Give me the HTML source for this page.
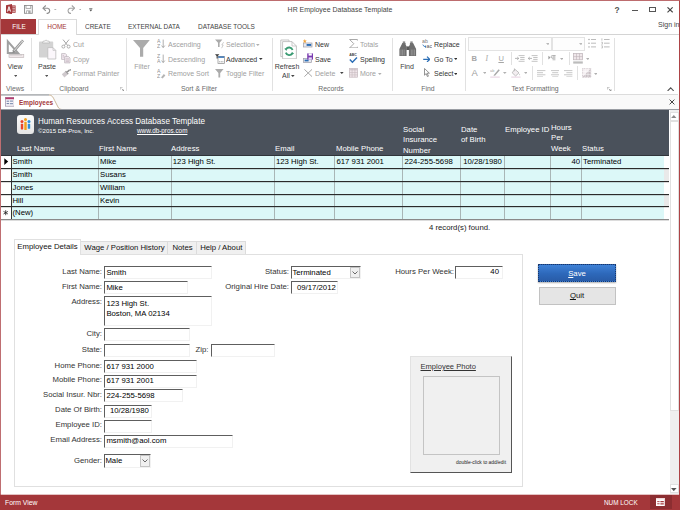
<!DOCTYPE html>
<html><head><meta charset="utf-8"><title>HR Employee Database Template</title>
<style>
*{box-sizing:border-box;margin:0;padding:0}
html,body{width:680px;height:510px;overflow:hidden;background:#fff}
body{font-family:"Liberation Sans",sans-serif;font-size:8px;color:#444;position:relative}
.a{position:absolute;white-space:nowrap}
.t{position:absolute;white-space:nowrap;line-height:10px;height:10px}
.g{color:#a6a6a6}
.k{color:#333}
#win{position:absolute;left:0;top:0;width:680px;height:510px;border-left:1px solid #bf6e71;border-right:1px solid #ad4346;border-top:1px solid #bd6c6e}
/* ribbon */
.sep{position:absolute;top:38px;height:53px;width:1px;background:#e1e1e1}
.gl{position:absolute;top:83.7px;height:10px;line-height:10px;font-size:7.6px;color:#6a6a6a;width:80px;text-align:center;transform:scaleX(.9);white-space:nowrap}
.r{position:absolute;white-space:nowrap;line-height:10px;height:10px;font-size:7.8px;transform:scaleX(.9);transform-origin:0 50%;color:#444}
.rc{position:absolute;white-space:nowrap;line-height:10px;height:10px;font-size:7.8px;width:60px;text-align:center;transform:scaleX(.9);transform-origin:50% 50%;color:#444}
.r.g,.rc.g{color:#a0a0a0}.r.k,.rc.k{color:#3b3b3b}
.r.u,.rc.u{font-size:7.5px;transform:scaleX(.86)}.u{}
/* form */
.f{font-family:"Liberation Sans",sans-serif;font-size:7.75px;color:#000}
.hd{position:absolute;color:#fff;font-size:7.75px;line-height:9px;white-space:nowrap}
.row{position:absolute;left:1px;width:668px;height:13px}
.cell{position:absolute;top:0;height:13px;background:#dff9f9;border-left:1px solid #9aa;font-size:7.4px;line-height:12px;color:#000;padding-left:1px;white-space:nowrap;overflow:hidden}
.lb{position:absolute;font-size:7.75px;line-height:10px;color:#333;text-align:right;white-space:nowrap}
.tb{position:absolute;background:#fff;border-top:1px solid #5e5e5e;border-left:1px solid #5e5e5e;border-right:1px solid #f1f1f1;border-bottom:1px solid #f1f1f1;font-size:7.75px;line-height:10px;color:#000;padding-left:1.4px;padding-top:.7px;white-space:nowrap;overflow:hidden}
</style></head><body>
<div id="win"></div>

<!-- TITLE BAR -->
<div id="titlebar">
<div class="rc" style="left:239.5px;width:200px;top:5.2px;font-size:7.8px;color:#444;transform:scaleX(.893)">HR Employee Database Template</div>
<svg class="a" style="left:6.4px;top:4.2px" width="10.2" height="10.2" viewBox="0 0 10.2 10.2"><path d="M0 1.2 L6 0 V10.2 L0 9 Z" fill="#a4373a"/><rect x="6" y="1.4" width="3.6" height="7.4" fill="#a4373a"/><path d="M6.4 2.8H9M6.4 4.4H9M6.4 6H9M6.4 7.6H9" stroke="#fff" stroke-width=".6"/><path d="M1.4 7.6 L3 2.6 L4.6 7.6 M2 6H4" fill="none" stroke="#fff" stroke-width=".9"/></svg>
<svg class="a" style="left:24.4px;top:5.4px" width="8.8" height="8.8" viewBox="0 0 8.8 8.8"><rect x=".5" y=".5" width="7.8" height="7.8" fill="#fafafa" stroke="#8c8c8c" stroke-width=".9"/><rect x="2" y=".5" width="4.8" height="2.8" fill="#fff" stroke="#8c8c8c" stroke-width=".7"/><rect x="2.2" y="5.4" width="4.4" height="2.9" fill="#a6a6a6"/><rect x="3" y="6.2" width="1.2" height="2.1" fill="#fff"/></svg>
<svg class="a" style="left:42.2px;top:5.2px" width="9.4" height="8.6" viewBox="0 0 9.4 8.6"><path d="M1 3.2 H5.4 A2.7 2.7 0 0 1 5.4 8.4 H4.4" fill="none" stroke="#8e8e8e" stroke-width="1.1" transform="scale(1.05 1)"/><path d="M3.8 .5 L1 3.2 L3.8 5.9" fill="none" stroke="#8e8e8e" stroke-width="1.1"/></svg>
<svg class="a" style="left:65.8px;top:5.2px" width="9.6" height="8.6" viewBox="0 0 9.6 8.6"><path d="M8.4 3.2 H4 A2.7 2.7 0 0 0 4 8.4 H5" fill="none" stroke="#a2a2a2" stroke-width="1.1"/><path d="M5.8 .5 L8.6 3.2 L5.8 5.9" fill="none" stroke="#a2a2a2" stroke-width="1.1"/></svg>
<svg class="a" style="left:54.400000000000006px;top:8.549999999999999px" width="2.6" height="1.5" viewBox="0 0 4 2.2"><path d="M0 0H4L2 2.2Z" fill="#b0b0b0"/></svg>
<svg class="a" style="left:78.9px;top:8.549999999999999px" width="2.6" height="1.5" viewBox="0 0 4 2.2"><path d="M0 0H4L2 2.2Z" fill="#b0b0b0"/></svg>
<svg class="a" style="left:89.4px;top:8.4px" width="3.6" height="3.6" viewBox="0 0 3.6 3.6"><path d="M.2 .4H3.4" stroke="#555" stroke-width=".7"/><path d="M.2 1.6H3.4L1.8 3.4Z" fill="#555"/></svg>
<div class="t" style="left:614.6px;top:4.6px;font-size:8.4px;font-weight:bold;color:#555">?</div>
<div class="a" style="left:632.4px;top:10.2px;width:5.2px;height:1.2px;background:#555"></div>
<div class="a" style="left:649.4px;top:6.6px;width:6.2px;height:5.8px;border:1px solid #555;border-top-width:1.6px"></div>
<svg class="a" style="left:667.2px;top:7px" width="6.2" height="5.6" viewBox="0 0 6.2 5.6"><path d="M.5 .3L5.7 5.3M5.7 .3L.5 5.3" stroke="#444" stroke-width="1.1"/></svg>
</div>

<!-- RIBBON TABS -->
<div id="tabs">
<div class="a" style="left:1px;top:19px;width:35px;height:15.4px;background:#a4373a"></div>
<div class="a" style="left:1px;top:34px;width:678px;height:1px;background:#d4d4d4"></div>
<div class="a" style="left:38px;top:19px;width:38.6px;height:16px;background:#fff;border:1px solid #dadada;border-bottom:none"></div>
<div class="rc u" style="left:-11.5px;top:21.8px;color:#fff">FILE</div>
<div class="rc u" style="left:27.3px;top:21.8px;color:#a4373a">HOME</div>
<div class="r u" style="left:85.4px;top:21.8px">CREATE</div>
<div class="r u" style="left:127.6px;top:21.8px">EXTERNAL DATA</div>
<div class="r u" style="left:198.3px;top:21.8px">DATABASE TOOLS</div>
<div class="r" style="left:657.6px;top:20.4px;color:#444">Sign in</div>
</div>

<!-- RIBBON -->
<div id="ribbon">
<div class="a" style="left:1px;top:94px;width:677px;height:1px;background:#dcdcdc"></div>
<div class="sep" style="left:30.5px"></div>
<div class="sep" style="left:126px"></div>
<div class="sep" style="left:272px"></div>
<div class="sep" style="left:392px"></div>
<div class="sep" style="left:465px"></div>
<div class="sep" style="left:614px"></div>
<div class="gl" style="left:-25px">Views</div>
<div class="gl" style="left:34px">Clipboard</div>
<div class="gl" style="left:159px">Sort &amp; Filter</div>
<div class="gl" style="left:291px">Records</div>
<div class="gl" style="left:388px">Find</div>
<div class="gl" style="left:495px">Text Formatting</div>
<svg class="a" style="left:6px;top:38px" width="19" height="21" viewBox="0 0 19 21"><path d="M1.8 3.4 V15 H12 Z" fill="none" stroke="#a0a0a0" stroke-width="2" stroke-linejoin="miter"/>
<rect x="3" y="16.4" width="14.8" height="3.2" fill="#f0e8ea" stroke="#bdb5b7" stroke-width=".6"/>
<path d="M5 16.4v1.5M7 16.4v1.5M9 16.4v1.5M11 16.4v1.5M13 16.4v1.5M15 16.4v1.5" stroke="#a6a6a6" stroke-width=".5"/>
<path d="M17 2.4 L7.2 13.8" stroke="#9a9a9a" stroke-width="2.8" stroke-linecap="butt"/><path d="M16.2 3.4 L8 12.9" stroke="#e4e4e4" stroke-width=".9"/>
<path d="M7.9 12.6 L6 15.2 L8.8 14.2 Z" fill="#8a8a8a"/><path d="M15.2 2.6 L17.6 4.6" stroke="#fff" stroke-width=".7"/></svg>
<div class="rc k" style="left:-15px;top:61.5px;">View</div>
<svg class="a" style="left:13.8px;top:74.95px" width="3.4" height="1.9" viewBox="0 0 4 2.2"><path d="M0 0H4L2 2.2Z" fill="#555"/></svg>
<svg class="a" style="left:38px;top:39px" width="19" height="21" viewBox="0 0 19 21"><rect x="1" y="2.6" width="14.2" height="16" rx=".8" fill="#d3d3d3"/>
<path d="M4.4 4 L5.4 2 H6.9 A1.3 1.3 0 0 1 9.3 2 H10.8 L11.8 4 Z" fill="#f4f4f4" stroke="#b4b4b4" stroke-width=".7"/>
<path d="M9.8 8.6 H15 L17.8 11.4 V20 H9.8 Z" fill="#fbf7fb" stroke="#bdbdbd" stroke-width=".8"/>
<path d="M15 8.6 V11.4 H17.8" fill="none" stroke="#bdbdbd" stroke-width=".7"/></svg>
<div class="rc k" style="left:16.5px;top:61.5px;">Paste</div>
<svg class="a" style="left:44.5px;top:74.95px" width="3.4" height="1.9" viewBox="0 0 4 2.2"><path d="M0 0H4L2 2.2Z" fill="#555"/></svg>
<svg class="a" style="left:61px;top:39px" width="10" height="10" viewBox="0 0 10 10"><path d="M2 .6 L6.6 6.4 M8 .6 L3.4 6.4" stroke="#9c9c9c" stroke-width=".9" fill="none"/>
<circle cx="2.4" cy="7.6" r="1.5" fill="none" stroke="#9c9c9c" stroke-width=".8"/><circle cx="7.6" cy="7.6" r="1.5" fill="none" stroke="#9c9c9c" stroke-width=".8"/></svg>
<div class="r g" style="left:72.5px;top:39.8px;">Cut</div>
<svg class="a" style="left:61px;top:53px" width="10" height="10.5" viewBox="0 0 10 10.5"><path d="M.6 .6 H4.4 L5.6 1.8 V6.4 H.6 Z" fill="#f3eaf0" stroke="#b9b1b7" stroke-width=".7"/>
<path d="M3.6 3.6 H7.6 L9 5 V9.9 H3.6 Z" fill="#f3eaf0" stroke="#b9b1b7" stroke-width=".7"/>
<path d="M4.6 5.8H8M4.6 7.2H8M4.6 8.6H8M1.6 2.6H3M1.6 4H3" stroke="#b9a9b5" stroke-width=".6"/></svg>
<div class="r g" style="left:72.5px;top:54.5px;">Copy</div>
<svg class="a" style="left:61px;top:68.5px" width="10.5" height="9" viewBox="0 0 10.5 9"><path d="M.8 5.2 L5 1.8 L7.6 4.8 L3.4 8.4 Z" fill="#cfc9cd"/><path d="M4.6 2.2 L7.2 5.2" stroke="#9a9a9a" stroke-width="1.1"/>
<path d="M6.2 3 L8.4 1.2" stroke="#8a8a8a" stroke-width="1.6"/><circle cx="9.2" cy=".9" r=".8" fill="#8a8a8a"/></svg>
<div class="r g" style="left:72.5px;top:69.2px;">Format Painter</div>
<div id="RIB2">
<svg class="a" style="left:133px;top:40px" width="17" height="17" viewBox="0 0 17 17"><path d="M0 0 H16.8 L10.2 8 V16.8 H7 V8 Z" fill="#ababab"/></svg>
<div class="rc g" style="left:111.80000000000001px;top:61.5px;">Filter</div>
<svg class="a" style="left:157px;top:39px" width="9" height="10" viewBox="0 0 9 10"><text x="0" y="4.4" font-size="5.2" font-family="Liberation Sans" fill="#929292">A</text><text x="0" y="9.2" font-size="5.2" font-family="Liberation Sans" fill="#929292">Z</text><path d="M6.2 .6 V8.4 M4.6 6.6 L6.2 8.6 L7.8 6.6" stroke="#9a9a9a" stroke-width=".8" fill="none"/></svg>
<div class="r g" style="left:167.8px;top:39.8px;">Ascending</div>
<svg class="a" style="left:157px;top:53.5px" width="9" height="10" viewBox="0 0 9 10"><text x="0" y="4.4" font-size="5.2" font-family="Liberation Sans" fill="#929292">Z</text><text x="0" y="9.2" font-size="5.2" font-family="Liberation Sans" fill="#929292">A</text><path d="M6.2 .6 V8.4 M4.6 6.6 L6.2 8.6 L7.8 6.6" stroke="#9a9a9a" stroke-width=".8" fill="none"/></svg>
<div class="r g" style="left:167.8px;top:54.5px;">Descending</div>
<svg class="a" style="left:157px;top:68.5px" width="9" height="10" viewBox="0 0 9 10"><text x="0" y="4.4" font-size="5.2" font-family="Liberation Sans" fill="#929292">A</text><text x="0" y="9.2" font-size="5.2" font-family="Liberation Sans" fill="#929292">Z</text><path d="M4 8.4 L6.8 5 L8.4 6.4 L5.6 9.4 Z" fill="#b4b4b4"/></svg>
<div class="r g" style="left:167.8px;top:69.2px;">Remove Sort</div>
<svg class="a" style="left:214.5px;top:39px" width="9.5" height="9.5" viewBox="0 0 9.5 9.5"><path d="M0 .4 H7.4 L4.6 3.8 V8 H3 V3.8 Z" fill="#ababab"/><path d="M8.6 3.2 L6.8 6 H8.2 L6.6 9.2" stroke="#b9b9b9" stroke-width=".7" fill="none"/></svg>
<div class="r g" style="left:226px;top:39.8px;">Selection</div>
<svg class="a" style="left:256.2px;top:43.7px" width="3.6" height="2.2" viewBox="0 0 4 2.2"><path d="M0 0H4L2 2.2Z" fill="#b0b0b0"/></svg>
<svg class="a" style="left:214.5px;top:53.5px" width="10" height="10" viewBox="0 0 10 10"><path d="M0 .2 H4.4 L2.8 2 V4.6 H1.6 V2 Z" fill="#3a3a3a"/><rect x="3" y="2.6" width="6.4" height="6.8" fill="#fff" stroke="#8a8a8a" stroke-width=".7"/><rect x="3.2" y="2.4" width="6" height="1.4" fill="#2a6db5"/><path d="M4.2 7.8h1M5.8 7.8h1M7.4 7.8h1" stroke="#777" stroke-width=".8"/></svg>
<div class="r k" style="left:226px;top:54.5px;color:#333">Advanced</div>
<svg class="a" style="left:259.4px;top:58.4px" width="3.6" height="2.2" viewBox="0 0 4 2.2"><path d="M0 0H4L2 2.2Z" fill="#333"/></svg>
<svg class="a" style="left:214.5px;top:69px" width="9" height="9" viewBox="0 0 9 9"><path d="M0 0 H8.6 L5.2 4 V8.6 H3.4 V4 Z" fill="#ababab"/></svg>
<div class="r g" style="left:226.2px;top:69.2px;">Toggle Filter</div>
<svg class="a" style="left:280px;top:38.5px" width="17.5" height="20.5" viewBox="0 0 17.5 20.5"><path d="M.8 1 H9 V17.6 H.8 Z" fill="#fff" stroke="#b5b5b5" stroke-width=".8"/>
<path d="M2.6 2.6 H12 L16.4 7 V19.8 H2.6 Z" fill="#fff" stroke="#b5b5b5" stroke-width=".8"/><path d="M12 2.6 V7 H16.4" fill="none" stroke="#b5b5b5" stroke-width=".7"/>
<path d="M12.6 11 A3.6 3.6 0 0 0 6 10.4" fill="none" stroke="#3a9b73" stroke-width="1.8"/><path d="M4.6 9.2 L7.6 9.2 L6 12 Z" fill="#3a9b73" transform="rotate(-20 6 10.4)"/>
<path d="M5.8 13.6 A3.6 3.6 0 0 0 12.4 14.2" fill="none" stroke="#3a9b73" stroke-width="1.8"/><path d="M10.8 15.4 L13.8 15.4 L12.4 12.6 Z" fill="#3a9b73" transform="rotate(-20 12.4 14.2)"/></svg>
<div class="rc k" style="left:257.4px;top:61.5px;">Refresh</div>
<div class="r k" style="left:281.6px;top:71.4px;">All</div>
<svg class="a" style="left:291.4px;top:75.3px" width="3.6" height="2.2" viewBox="0 0 4 2.2"><path d="M0 0H4L2 2.2Z" fill="#444"/></svg>
<svg class="a" style="left:302.5px;top:38.5px" width="10" height="9" viewBox="0 0 10 9"><rect x=".6" y="4" width="8.4" height="4" fill="#e9e9ee" stroke="#9a9aa6" stroke-width=".7"/><rect x="3.6" y="5" width="4.6" height="1.9" fill="#2a6db5"/><path d="M1.8 0 L2.4 1.4 L3.8 1.6 L2.7 2.5 L3.1 4 L1.8 3.2 L.5 4 L.9 2.5 L-.2 1.6 L1.2 1.4 Z" fill="#f2a33a"/></svg>
<div class="r k" style="left:315px;top:39.8px;color:#333">New</div>
<svg class="a" style="left:302.5px;top:53px" width="10.5" height="10" viewBox="0 0 10.5 10"><rect x=".6" y="5.6" width="8" height="3.8" fill="#e9e9ee" stroke="#9a9aa6" stroke-width=".7"/><rect x="1.6" y="6.6" width="4" height="1.8" fill="#2a6db5"/><path d="M4.2 .4 H10.2 V6.6 H4.2 Z" fill="#7a3bb0"/><rect x="5.6" y=".4" width="3.2" height="2.2" fill="#fff"/><rect x="5.6" y="4.4" width="3.2" height="2.2" fill="#e9defa"/></svg>
<div class="r k" style="left:315px;top:54.5px;color:#333">Save</div>
<svg class="a" style="left:303.5px;top:69.3px" width="8.5" height="8" viewBox="0 0 8.5 8"><path d="M.4 .4 L8 7.6 M8 .4 L.4 7.6" stroke="#a8a8a8" stroke-width="1" fill="none"/></svg>
<div class="r g" style="left:315px;top:69.2px;">Delete</div>
<svg class="a" style="left:340.4px;top:71.89999999999999px" width="3.6" height="2.2" viewBox="0 0 4 2.2"><path d="M0 0H4L2 2.2Z" fill="#444"/></svg>
<svg class="a" style="left:348.5px;top:38.8px" width="9" height="9.4" viewBox="0 0 9 9.4"><path d="M8.4 1.6 V.5 H.6 L4.8 4.7 L.6 8.9 H8.4 V7.8" fill="none" stroke="#a8a8a8" stroke-width="1"/></svg>
<div class="r g" style="left:360.1px;top:39.8px;">Totals</div>
<svg class="a" style="left:348.8px;top:53.2px" width="9" height="10.4" viewBox="0 0 9 10.4"><text x=".2" y="3.2" font-size="3.6" font-weight="bold" font-family="Liberation Sans" fill="#444" textLength="7.6" lengthAdjust="spacingAndGlyphs">ABC</text><path d="M.8 6.6 L3.4 9.2 L8 4.4" fill="none" stroke="#2a6db5" stroke-width="1.4"/></svg>
<div class="r k" style="left:360.1px;top:54.5px;color:#333">Spelling</div>
<svg class="a" style="left:348.6px;top:68.2px" width="9" height="9.6" viewBox="0 0 9 9.6"><rect x=".4" y=".4" width="8.2" height="8.8" fill="#f0e6ea" stroke="#c4b8be" stroke-width=".7"/><rect x=".4" y=".4" width="8.2" height="2" fill="#d3c9cf"/><path d="M3.1 .4V9.2M5.9 .4V9.2M.4 4.6H8.6M.4 6.9H8.6" stroke="#c4b8be" stroke-width=".6"/></svg>
<div class="r g" style="left:360.1px;top:69.2px;">More</div>
<svg class="a" style="left:378.2px;top:73.1px" width="3.6" height="2.2" viewBox="0 0 4 2.2"><path d="M0 0H4L2 2.2Z" fill="#b0b0b0"/></svg>
<svg class="a" style="left:399px;top:40.5px" width="17.5" height="15.5" viewBox="0 0 17.5 15.5"><path d="M3.4 2 H6.6 V3.4 L7.6 5.4 V15 H.4 V8 Z" fill="#6e6e6e"/><path d="M14.1 2 H10.9 V3.4 L9.9 5.4 V15 H17.1 V8 Z" fill="#6e6e6e"/>
<rect x="3.8" y=".4" width="2.4" height="1.8" fill="#8a8a8a"/><rect x="11.3" y=".4" width="2.4" height="1.8" fill="#8a8a8a"/><rect x="7.4" y="5.4" width="2.8" height="3.6" fill="#5a5a5a"/>
<path d="M2 8.5V14.5M3.6 8.5V14.5M5.2 8.5V14.5M12.3 8.5V14.5M13.9 8.5V14.5M15.5 8.5V14.5" stroke="#a9a9a9" stroke-width=".6"/></svg>
<div class="rc k" style="left:377.4px;top:61.5px;">Find</div>
<svg class="a" style="left:421.8px;top:39px" width="10.4" height="9.6" viewBox="0 0 10.4 9.6"><text x="0" y="4.2" font-size="5.2" font-family="Liberation Sans" fill="#777">ab</text><text x="4.6" y="9" font-size="5.2" font-family="Liberation Sans" fill="#555">ac</text><path d="M.8 5.6 Q1.4 8 4 7.6 M3 6.6 L4.2 7.6 L3 8.8" fill="none" stroke="#2a6db5" stroke-width=".8"/></svg>
<div class="r k" style="left:433.9px;top:39.8px;color:#333">Replace</div>
<svg class="a" style="left:422.8px;top:55.6px" width="7.6" height="6.6" viewBox="0 0 7.6 6.6"><path d="M.2 3.3 H6.6 M4 .6 L6.8 3.3 L4 6" fill="none" stroke="#2a6db5" stroke-width="1.2"/></svg>
<div class="r k" style="left:433.9px;top:54.5px;color:#333">Go To</div>
<svg class="a" style="left:453.9px;top:58.4px" width="3.6" height="2.2" viewBox="0 0 4 2.2"><path d="M0 0H4L2 2.2Z" fill="#333"/></svg>
<svg class="a" style="left:424px;top:68.2px" width="6" height="9.2" viewBox="0 0 6 9.2"><path d="M.5 .5 V7.2 L2.2 5.6 L3.4 8.6 L4.4 8.2 L3.2 5.2 H5.4 Z" fill="#fff" stroke="#666" stroke-width=".7"/></svg>
<div class="r k" style="left:433.9px;top:69.2px;color:#333">Select</div>
<svg class="a" style="left:453.9px;top:73.1px" width="3.6" height="2.2" viewBox="0 0 4 2.2"><path d="M0 0H4L2 2.2Z" fill="#333"/></svg>
<div class="a" style="left:467.5px;top:37px;width:84px;height:14.2px;background:#fdfdfd;border:1px solid #e3e3e3"></div>
<div class="a" style="left:551.5px;top:37px;width:33.5px;height:14.2px;background:#fdfdfd;border:1px solid #e3e3e3"></div>
<svg class="a" style="left:545.5px;top:42.849999999999994px" width="3.8000000000000003" height="2.3000000000000003" viewBox="0 0 4 2.2"><path d="M0 0H4L2 2.2Z" fill="#b9b9b9"/></svg>
<svg class="a" style="left:578.6px;top:42.849999999999994px" width="3.8000000000000003" height="2.3000000000000003" viewBox="0 0 4 2.2"><path d="M0 0H4L2 2.2Z" fill="#b9b9b9"/></svg>
<svg class="a" style="left:587.5px;top:38px" width="8.5" height="10.5" viewBox="0 0 8.5 10.5"><path d="M3 1.5H8M3 5.2H8M3 8.9H8" stroke="#b4b4b4" stroke-width=".9"/><circle cx="1" cy="1.5" r=".7" fill="#9a9a9a"/><circle cx="1" cy="5.2" r=".7" fill="#9a9a9a"/><circle cx="1" cy="8.9" r=".7" fill="#9a9a9a"/></svg>
<svg class="a" style="left:600.6px;top:38px" width="9" height="10.5" viewBox="0 0 9 10.5"><path d="M3 1.5H8.6M3 5.2H8.6M3 8.9H8.6" stroke="#b4b4b4" stroke-width=".9"/><path d="M.9 .4V2.6M.4 4.2H1.4V6.2H.4M.4 7.8H1.4V10H.4" stroke="#9a9a9a" stroke-width=".6" fill="none"/></svg>
<div class="t" style="left:471.6px;top:53.9px;font-size:7.6px;font-weight:bold;color:#a6a6a6">B</div>
<div class="t" style="left:485.6px;top:53.9px;font-size:7.6px;font-style:italic;color:#a6a6a6;font-family:'Liberation Serif',serif">I</div>
<div class="t" style="left:498.4px;top:53.9px;font-size:7.6px;color:#a6a6a6;text-decoration:underline">U</div>
<div class="a" style="left:510.5px;top:51.5px;width:1px;height:13.5px;background:#e1e1e1"></div>
<div class="a" style="left:542.3px;top:51.5px;width:1px;height:13.5px;background:#e1e1e1"></div>
<div class="a" style="left:568.6px;top:51.5px;width:1px;height:13.5px;background:#e1e1e1"></div>
<div class="a" style="left:532.2px;top:66.2px;width:1px;height:13.599999999999994px;background:#e1e1e1"></div>
<div class="a" style="left:577.3px;top:66.2px;width:1px;height:13.599999999999994px;background:#e1e1e1"></div>
<svg class="a" style="left:515px;top:55px" width="10" height="7" viewBox="0 0 10 7"><path d="M3.6 .6H9.6M5.2 2.5H9.6M5.2 4.4H9.6M3.6 6.3H9.6" stroke="#b4b4b4" stroke-width=".8"/><path d="M0 3.4H3.6M2.2 2L3.8 3.4L2.2 4.8" stroke="#9a9a9a" stroke-width=".7" fill="none"/></svg>
<svg class="a" style="left:528.2px;top:55px" width="10" height="7" viewBox="0 0 10 7"><path d="M3.6 .6H9.6M5.2 2.5H9.6M5.2 4.4H9.6M3.6 6.3H9.6" stroke="#b4b4b4" stroke-width=".8"/><path d="M.4 3.4H4M1.8 2L.2 3.4L1.8 4.8" stroke="#9a9a9a" stroke-width=".7" fill="none"/></svg>
<svg class="a" style="left:548px;top:55.4px" width="8" height="5.6" viewBox="0 0 8 5.6"><path d="M.4 .8L2.6 2.6L.4 4.4Z" fill="#9a9a9a"/><path d="M5.2 .4V5.4M6.8 .4V5.4M7.6 .4H4.6A1.4 1.4 0 0 0 4.6 3.2H5.2" stroke="#9a9a9a" stroke-width=".7" fill="none"/></svg>
<svg class="a" style="left:559.9000000000001px;top:57.7px" width="3.6" height="2.2" viewBox="0 0 4 2.2"><path d="M0 0H4L2 2.2Z" fill="#b0b0b0"/></svg>
<svg class="a" style="left:573px;top:53px" width="10" height="11" viewBox="0 0 10 11"><rect x=".4" y=".4" width="9.2" height="6.4" fill="#efe7ea" stroke="#bdb3b8" stroke-width=".7"/><path d="M3.5 .4V6.8M6.5 .4V6.8M.4 3.6H9.6" stroke="#bdb3b8" stroke-width=".6"/><rect x=".2" y="8.4" width="9.6" height="2.2" fill="#bcbcbc"/></svg>
<svg class="a" style="left:585.8000000000001px;top:57.7px" width="3.6" height="2.2" viewBox="0 0 4 2.2"><path d="M0 0H4L2 2.2Z" fill="#b0b0b0"/></svg>
<div class="t" style="left:471.4px;top:67.8px;font-size:9.4px;color:#a0a0a0">A</div>
<svg class="a" style="left:482.7px;top:72.39999999999999px" width="3.6" height="2.2" viewBox="0 0 4 2.2"><path d="M0 0H4L2 2.2Z" fill="#b0b0b0"/></svg>
<svg class="a" style="left:490px;top:68px" width="10.4" height="9.6" viewBox="0 0 10.4 9.6"><text x="0" y="3.8" font-size="4" font-family="Liberation Sans" fill="#aaa">ab</text><path d="M3.4 7.4 L8.6 1.2 L9.8 2.2 L5 7.8 Z" fill="#a8a8a8"/><rect x=".2" y="8.6" width="9.6" height="1" fill="#e6cfe0"/></svg>
<svg class="a" style="left:503.3px;top:72.39999999999999px" width="3.6" height="2.2" viewBox="0 0 4 2.2"><path d="M0 0H4L2 2.2Z" fill="#b0b0b0"/></svg>
<svg class="a" style="left:511px;top:68px" width="10" height="9.6" viewBox="0 0 10 9.6"><path d="M3.8 1.2 L8 4.8 L4.6 8 L1.2 4.8 Z" fill="#f3eef1" stroke="#b0b0b0" stroke-width=".8"/><path d="M3.4 .4 V3.2" stroke="#b0b0b0" stroke-width=".7"/><path d="M8.6 5.4 Q9.6 7 8.8 7.6 Q8 7 8.6 5.4Z" fill="#b0b0b0"/><rect x=".2" y="8.6" width="9.4" height="1" fill="#e6cfe0"/></svg>
<svg class="a" style="left:523.7px;top:72.39999999999999px" width="3.6" height="2.2" viewBox="0 0 4 2.2"><path d="M0 0H4L2 2.2Z" fill="#b0b0b0"/></svg>
<svg class="a" style="left:537.2px;top:69.6px" width="8.6" height="7.6" viewBox="0 0 8.6 7.6"><path d="M0 0.6H8.4" stroke="#b9b9b9" stroke-width=".8"/><path d="M0 2.7H6" stroke="#b9b9b9" stroke-width=".8"/><path d="M0 4.8H8.4" stroke="#b9b9b9" stroke-width=".8"/><path d="M0 6.9H6" stroke="#b9b9b9" stroke-width=".8"/></svg>
<svg class="a" style="left:550.8px;top:69.6px" width="8.6" height="7.6" viewBox="0 0 8.6 7.6"><path d="M0.0 0.6H8.4" stroke="#b9b9b9" stroke-width=".8"/><path d="M1.2000000000000002 2.7H7.2" stroke="#b9b9b9" stroke-width=".8"/><path d="M0.0 4.8H8.4" stroke="#b9b9b9" stroke-width=".8"/><path d="M1.2000000000000002 6.9H7.2" stroke="#b9b9b9" stroke-width=".8"/></svg>
<svg class="a" style="left:564px;top:69.6px" width="8.6" height="7.6" viewBox="0 0 8.6 7.6"><path d="M0.0 0.6H8.4" stroke="#b9b9b9" stroke-width=".8"/><path d="M2.4000000000000004 2.7H8.4" stroke="#b9b9b9" stroke-width=".8"/><path d="M0.0 4.8H8.4" stroke="#b9b9b9" stroke-width=".8"/><path d="M2.4000000000000004 6.9H8.4" stroke="#b9b9b9" stroke-width=".8"/></svg>
<svg class="a" style="left:582.2px;top:68.2px" width="9.4" height="9.8" viewBox="0 0 9.4 9.8"><rect x=".4" y=".4" width="8.4" height="9" fill="#f4eef1" stroke="#c4bac0" stroke-width=".7" stroke-dasharray="1 .6"/><path d="M.6 9 L8.6 .8 V9 Z" fill="#c9c0c5"/><path d="M3.2 .4V9.4M6 .4V9.4M.4 3.4H8.8M.4 6.4H8.8" stroke="#fff" stroke-width=".5"/></svg>
<svg class="a" style="left:593.7px;top:72.5px" width="3.6" height="2.2" viewBox="0 0 4 2.2"><path d="M0 0H4L2 2.2Z" fill="#b0b0b0"/></svg>
<svg class="a" style="left:607.4px;top:86.8px" width="4.4" height="4.4" viewBox="0 0 4.4 4.4"><path d="M.3 2.6V.3H2.6" fill="none" stroke="#9a9a9a" stroke-width=".6"/><path d="M1.8 1.8L4 4M4 2.2V4H2.2" fill="none" stroke="#888" stroke-width=".7"/></svg>
<svg class="a" style="left:119.5px;top:86.8px" width="4.4" height="4.4" viewBox="0 0 4.4 4.4"><path d="M.3 2.6V.3H2.6" fill="none" stroke="#9a9a9a" stroke-width=".6"/><path d="M1.8 1.8L4 4M4 2.2V4H2.2" fill="none" stroke="#888" stroke-width=".7"/></svg>
<svg class="a" style="left:666.8px;top:86.6px" width="7.4" height="4.6" viewBox="0 0 7.4 4.6"><path d="M.6 4 L3.7 .9 L6.8 4" fill="none" stroke="#555" stroke-width="1.1"/></svg>
</div>
</div>

<!-- DOC TABS -->
<div id="doctabs">
<div class="a" style="left:1px;top:95px;width:678px;height:14px;background:#f9f9f9"></div>
<svg class="a" style="left:1px;top:94px" width="62" height="16" viewBox="0 0 62 16"><path d="M0 15.5 V1 H48 C51 1 52 3 53.6 6.4 L57 13 C58 15 59.4 15.5 61.5 15.5 Z" fill="#fff"/><path d="M0 1 H48" stroke="#8f9499" stroke-width="1" fill="none"/><path d="M48 1 C51 1 52 3 53.6 6.4 L57 13 C58 15 59.4 15.5 61.5 15.5" stroke="#cdb89c" stroke-width="1" fill="none"/></svg>
<svg class="a" style="left:4.6px;top:97.2px" width="9.6" height="9.6" viewBox="0 0 9.6 9.6"><rect x=".4" y=".4" width="8.8" height="8.8" fill="#f7f4f8" stroke="#9a8fa6" stroke-width=".7"/><rect x=".4" y=".4" width="8.8" height="1.8" fill="#b43a6e"/><path d="M1.6 4.2H4M1.6 6.6H4" stroke="#5a6e9a" stroke-width=".9"/><path d="M4.8 4.2H8M4.8 6.6H8" stroke="#8a9ab8" stroke-width="1.3"/></svg>
<div class="r" style="left:18.8px;top:97.6px;font-weight:bold;color:#a4373a;font-size:7.6px;transform:scaleX(.85)">Employees</div>
<svg class="a" style="left:669px;top:99.4px" width="6" height="6" viewBox="0 0 6 6"><path d="M.6 .6L5.4 5.4M5.4 .6L.6 5.4" stroke="#444" stroke-width="1"/></svg>
</div>

<!-- FORM HEADER -->
<div id="fhead">
<div class="a" style="left:1px;top:109px;width:668px;height:47px;background:#4a515b"></div><div class="a" style="left:1px;top:155px;width:668px;height:1px;background:#30343a"></div><div class="a" style="left:1px;top:109px;width:678px;height:1px;background:#9a9da3"></div>

<div class="a" style="left:17px;top:115px;width:17px;height:18.5px;border-radius:3.2px;background:linear-gradient(#fafafa,#e4e4e4)"></div>
<svg class="a" style="left:17px;top:115px" width="17" height="18" viewBox="0 0 17 18">
<circle cx="5" cy="6.6" r="1.5" fill="#e8452c"/><rect x="3.8" y="8.8" width="2.4" height="5.6" rx=".6" fill="#e8452c"/>
<circle cx="8.5" cy="4.6" r="1.5" fill="#f4a01c"/><rect x="7.3" y="6.8" width="2.4" height="8.2" rx=".6" fill="#f4a01c"/>
<circle cx="12" cy="6.6" r="1.5" fill="#2f8fd8"/><rect x="10.8" y="8.8" width="2.4" height="5" rx=".6" fill="#2f8fd8"/>
</svg>
<div class="hd" style="left:38px;top:116px;font-size:9px;line-height:10px;transform:scaleX(.9);transform-origin:0 50%">Human Resources Access Database Template</div>
<div class="hd" style="left:38px;top:127px;font-size:6.1px;line-height:8px">©2015 DB-Pros, Inc.</div>
<div class="hd" style="left:137px;top:127px;font-size:6.35px;line-height:8px;text-decoration:underline">www.db-pros.com</div>
<div class="hd" style="left:17px;top:144px">Last Name</div>
<div class="hd" style="left:99px;top:144px">First Name</div>
<div class="hd" style="left:171px;top:144px">Address</div>
<div class="hd" style="left:275px;top:144px">Email</div>
<div class="hd" style="left:336px;top:144px">Mobile Phone</div>
<div class="hd" style="left:403px;top:125px;line-height:10.4px">Social<br>Insurance<br>Number</div>
<div class="hd" style="left:461px;top:125px;line-height:10.4px">Date<br>of Birth</div>
<div class="hd" style="left:505px;top:125px">Employee ID</div>
<div class="hd" style="left:551px;top:123px;line-height:10.4px">Hours<br>Per<br>Week</div>
<div class="hd" style="left:582px;top:144px">Status</div>
</div>

<!-- ROWS -->
<div id="rows">
<div class="a" style="left:1px;top:156px;width:10px;height:64px;background:#fff"></div>
<div class="a" style="left:11px;top:156px;width:653px;height:64px;background:#dcf8f8"></div>
<div class="a" style="left:664px;top:156px;width:5px;height:13px;background:#fff"></div>
<div class="a" style="left:664px;top:169px;width:5px;height:13px;background:#e9e9e9"></div>
<div class="a" style="left:664px;top:182px;width:5px;height:13px;background:#fff"></div>
<div class="a" style="left:664px;top:195px;width:5px;height:12px;background:#e9e9e9"></div>
<div class="a" style="left:664px;top:207px;width:5px;height:13px;background:#fff"></div>
<div class="a" style="left:98px;top:156px;width:1px;height:64px;background:#a9b6b6"></div>
<div class="a" style="left:171px;top:156px;width:1px;height:64px;background:#a9b6b6"></div>
<div class="a" style="left:274px;top:156px;width:1px;height:64px;background:#a9b6b6"></div>
<div class="a" style="left:334px;top:156px;width:1px;height:64px;background:#a9b6b6"></div>
<div class="a" style="left:402px;top:156px;width:1px;height:64px;background:#a9b6b6"></div>
<div class="a" style="left:460px;top:156px;width:1px;height:64px;background:#a9b6b6"></div>
<div class="a" style="left:504px;top:156px;width:1px;height:64px;background:#a9b6b6"></div>
<div class="a" style="left:550px;top:156px;width:1px;height:64px;background:#a9b6b6"></div>
<div class="a" style="left:581px;top:156px;width:1px;height:64px;background:#a9b6b6"></div>
<div class="a" style="left:11px;top:156px;width:1px;height:64px;background:#333"></div>
<div class="a" style="left:1px;top:168px;width:668px;height:1px;background:#2b2b2b"></div>
<div class="a" style="left:1px;top:169px;width:668px;height:1px;background:rgba(60,60,60,.18)"></div>
<div class="a" style="left:1px;top:181px;width:668px;height:1px;background:#2b2b2b"></div>
<div class="a" style="left:1px;top:182px;width:668px;height:1px;background:rgba(60,60,60,.18)"></div>
<div class="a" style="left:1px;top:194px;width:668px;height:1px;background:#2b2b2b"></div>
<div class="a" style="left:1px;top:195px;width:668px;height:1px;background:rgba(60,60,60,.18)"></div>
<div class="a" style="left:1px;top:206px;width:668px;height:1px;background:#2b2b2b"></div>
<div class="a" style="left:1px;top:207px;width:668px;height:1px;background:rgba(60,60,60,.18)"></div>
<div class="a" style="left:1px;top:219px;width:668px;height:1px;background:#8a8a8a"></div>
<div class="a" style="left:1px;top:220px;width:668px;height:1px;background:rgba(60,60,60,.18)"></div>
<div class="t f" style="left:12.5px;top:157.0px">Smith</div>
<div class="t f" style="left:100.0px;top:157.0px">Mike</div>
<div class="t f" style="left:172.8px;top:157.0px">123 High St.</div>
<div class="t f" style="left:276.0px;top:157.0px">123 High St.</div>
<div class="t f" style="left:336.5px;top:157.0px">617 931 2001</div>
<div class="t f" style="left:404.5px;top:157.0px">224-255-5698</div>
<div class="t f" style="left:460.7px;width:43.7px;top:157.0px;text-align:center">10/28/1980</div>
<div class="t f" style="left:550.3px;width:29.8px;top:157.0px;text-align:right">40</div>
<div class="t f" style="left:583.1px;top:157.0px">Terminated</div>
<div class="t f" style="left:12.5px;top:170.0px">Smith</div>
<div class="t f" style="left:100.0px;top:170.0px">Susans</div>
<div class="t f" style="left:12.5px;top:183.0px">Jones</div>
<div class="t f" style="left:100.0px;top:183.0px">William</div>
<div class="t f" style="left:12.5px;top:195.5px">Hill</div>
<div class="t f" style="left:100.0px;top:195.5px">Kevin</div>
<div class="t f" style="left:12.5px;top:208.0px">(New)</div>
<svg class="a" style="left:4.2px;top:157.8px" width="5" height="7.4" viewBox="0 0 5 7.4"><path d="M0.3 0.2 L4.2 3.6 L0.3 7 Z" fill="#000"/></svg>
<svg class="a" style="left:3.4px;top:210.4px" width="5.4" height="5.4" viewBox="0 0 5.4 5.4"><path d="M2.7 .2V5.2M.5 1.4L4.9 4M4.9 1.4L.5 4" stroke="#222" stroke-width=".8"/></svg>
<div class="t f" style="left:429px;top:223px;color:#222">4 record(s) found.</div>
</div>

<!-- TABCTL -->
<div id="tabctl">
<div class="a" style="left:14px;top:254px;width:509px;height:233px;background:#fff;border:1px solid #e0e0e0"></div>
<div class="a" style="left:14px;top:239px;width:67px;height:16px;background:#fff;border:1px solid #e0e0e0;border-bottom:none"></div>
<div class="t f" style="left:14px;width:67px;top:242px;text-align:center;color:#111">Employee Details</div>
<div class="a" style="left:81px;top:241px;width:87px;height:13px;background:#f0f0f0;border:1px solid #dcdcdc;border-bottom:none;border-left:none"></div>
<div class="t f" style="left:81px;width:87px;top:242.5px;text-align:center;color:#111">Wage / Position History</div>
<div class="a" style="left:168px;top:241px;width:29px;height:13px;background:#f0f0f0;border:1px solid #dcdcdc;border-bottom:none;border-left:none"></div>
<div class="t f" style="left:168px;width:29px;top:242.5px;text-align:center;color:#111">Notes</div>
<div class="a" style="left:197px;top:241px;width:48.5px;height:13px;background:#f0f0f0;border:1px solid #dcdcdc;border-bottom:none;border-left:none"></div>
<div class="t f" style="left:197px;width:48.5px;top:242.5px;text-align:center;color:#111">Help / About</div>
<div class="lb" style="left:2px;width:100px;top:267px">Last Name:</div>
<div class="tb" style="left:104px;top:266px;width:108px;height:13px;text-align:left;">Smith</div>
<div class="lb" style="left:2px;width:100px;top:282px">First Name:</div>
<div class="tb" style="left:104px;top:281px;width:84px;height:13.4px;text-align:left;">Mike</div>
<div class="lb" style="left:2px;width:100px;top:297px">Address:</div>
<div class="tb" style="left:104px;top:296px;width:108px;height:30px;text-align:left;padding-top:1.6px;line-height:10.4px">123 High St.<br>Boston, MA 02134</div>
<div class="lb" style="left:2px;width:100px;top:329px">City:</div>
<div class="tb" style="left:104px;top:328px;width:86px;height:13px;text-align:left;"></div>
<div class="lb" style="left:2px;width:100px;top:345px">State:</div>
<div class="tb" style="left:104px;top:344px;width:86px;height:13px;text-align:left;"></div>
<div class="lb" style="left:108.5px;width:100px;top:345px">Zip:</div>
<div class="tb" style="left:211px;top:344px;width:63.5px;height:13px;text-align:left;"></div>
<div class="lb" style="left:2px;width:100px;top:360.5px">Home Phone:</div>
<div class="tb" style="left:104px;top:360px;width:93px;height:13px;text-align:left;">617 931 2000</div>
<div class="lb" style="left:2px;width:100px;top:375px">Mobile Phone:</div>
<div class="tb" style="left:104px;top:374.7px;width:93px;height:13px;text-align:left;">617 931 2001</div>
<div class="lb" style="left:2px;width:100px;top:390px">Social Insur. Nbr:</div>
<div class="tb" style="left:104px;top:389.4px;width:79px;height:13px;text-align:left;">224-255-5698</div>
<div class="lb" style="left:2px;width:100px;top:405px">Date Of Birth:</div>
<div class="tb" style="left:104px;top:404.6px;width:47.5px;height:13px;text-align:left;padding-left:5px">10/28/1980</div>
<div class="lb" style="left:2px;width:100px;top:420px">Employee ID:</div>
<div class="tb" style="left:104px;top:419.7px;width:47.5px;height:13px;text-align:left;"></div>
<div class="lb" style="left:2px;width:100px;top:435px">Email Address:</div>
<div class="tb" style="left:104px;top:434.7px;width:129px;height:13px;text-align:left;">msmith@aol.com</div>
<div class="lb" style="left:2px;width:100px;top:456px">Gender:</div>
<div class="lb" style="left:189px;width:100px;top:267px">Status:</div>
<div class="lb" style="left:189px;width:100px;top:282px">Original Hire Date:</div>
<div class="tb" style="left:291px;top:281px;width:47px;height:13px;text-align:left;padding-left:5px">09/17/2012</div>
<div class="lb" style="left:354px;width:100px;top:267px">Hours Per Week:</div>
<div class="tb" style="left:455.4px;top:265.5px;width:47.6px;height:13px;text-align:right;padding-right:3px">40</div>
<div class="tb" style="left:104px;top:453.5px;width:46.5px;height:14px;padding-top:1px;padding-left:.4px;font-size:7.75px">Male</div>
<div class="a" style="left:139.5px;top:454.5px;width:10px;height:12px;background:#f0f0f0;border:1px solid #c4c4c4"></div>
<svg class="a" style="left:141.5px;top:458.5px" width="6" height="4" viewBox="0 0 6 4"><path d="M0.5 0.5 L3 3 L5.5 0.5" fill="none" stroke="#5a5a5a" stroke-width="0.9"/></svg>
<div class="tb" style="left:291px;top:266px;width:69.5px;height:13px;padding-top:1px;padding-left:.4px;font-size:7.75px">Terminated</div>
<div class="a" style="left:349.5px;top:267px;width:10px;height:11px;background:#f0f0f0;border:1px solid #c4c4c4"></div>
<svg class="a" style="left:351.5px;top:270.5px" width="6" height="4" viewBox="0 0 6 4"><path d="M0.5 0.5 L3 3 L5.5 0.5" fill="none" stroke="#5a5a5a" stroke-width="0.9"/></svg>
<div class="a" style="left:538.3px;top:264px;width:78px;height:18.4px;background:linear-gradient(#3f81d6,#2d68ba 55%,#295ca8);border:1px dotted #17386e;box-shadow:0 1px 1.5px rgba(0,0,0,.3)"></div>
<div class="t f" style="left:538px;width:78px;top:268.5px;text-align:center;color:#fff"><u>S</u>ave</div>
<div class="a" style="left:539px;top:287.4px;width:76.5px;height:17.4px;background:#e5e5e5;border:1px solid #c2c2c2"></div>
<div class="t f" style="left:538px;width:78px;top:291px;text-align:center;color:#111"><u>Q</u>uit</div>
<div class="a" style="left:410px;top:356px;width:101.5px;height:117px;background:#f0f0f0;border-right:1.5px solid #555;border-bottom:1.5px solid #555;border-left:1px solid #e2e2e2;border-top:1px solid #e2e2e2"></div>
<div class="t f" style="left:420.5px;top:362px;color:#333;text-decoration:underline;font-size:7.55px">Employee Photo</div>
<div class="a" style="left:423px;top:376px;width:77px;height:79px;background:#f0f0f0;border:1px solid #c4c4c4"></div>
<div class="t f" style="left:406px;width:100px;text-align:right;top:458px;font-size:4.9px;color:#222">double-click to add/edit</div>
</div>

<!-- SCROLLBAR -->
<div id="vscroll">
<div class="a" style="left:669.6px;top:110px;width:9px;height:384px;background:#efefef"></div>
<div class="a" style="left:669.6px;top:111.6px;width:9px;height:9.4px;background:#fff;border:1px solid #e0e0e0"></div>
<svg class="a" style="left:671.4px;top:114.6px" width="5.6" height="3.2" viewBox="0 0 4.6 2.6"><path d="M0 2.6H4.6L2.3 0Z" fill="#8a8a8a"/></svg>
<div class="a" style="left:669.6px;top:121px;width:9px;height:289.6px;background:#fff;border:1px solid #e0e0e0"></div>
<div class="a" style="left:669.6px;top:483.8px;width:9px;height:9.6px;background:#fff;border:1px solid #e0e0e0"></div>
<svg class="a" style="left:671.4px;top:487.6px" width="5.6" height="3.2" viewBox="0 0 4.6 2.6"><path d="M0 0H4.6L2.3 2.6Z" fill="#555"/></svg>
</div>

<!-- STATUS BAR -->
<div id="status">
<div class="a" style="left:0;top:494px;width:680px;height:1px;background:rgba(164,55,58,.3)"></div>
<div class="a" style="left:0;top:495px;width:680px;height:15px;background:#a4373a"></div>
<div class="a" style="left:649.6px;top:495px;width:22.2px;height:14px;background:#8c2e31"></div>
<svg class="a" style="left:656.2px;top:497.8px" width="8.8" height="8.2" viewBox="0 0 8.8 8.2"><rect x="0" y="0" width="8.8" height="8.2" fill="#fff"/><rect x="0" y="0" width="8.8" height="1.4" fill="#f0d9da"/><path d="M1.2 3.6H3.6M1.2 5.8H3.6" stroke="#a4373a" stroke-width=".9"/><path d="M4.4 3.6H7.8M4.4 5.8H7.8" stroke="#a4373a" stroke-width="1.3"/></svg>
<div class="r" style="left:5px;top:497.6px;color:#fff;font-size:7.6px">Form View</div>
<div class="r" style="left:603.9px;top:497.6px;color:#fff;font-size:7.5px;transform:scaleX(.85)">NUM LOCK</div>
</div>
</body></html>
